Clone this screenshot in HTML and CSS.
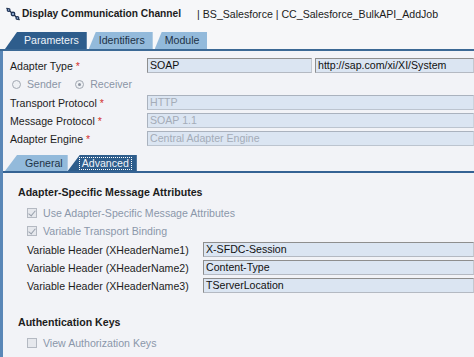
FILE: index.html
```html
<!DOCTYPE html>
<html lang="en">
  <head>
    <meta charset="UTF-8" />
    <title>Display Communication Channel</title>
    <link rel="stylesheet" href="styles.css">
  </head>
  <body>
    <div class="header">
      <svg class="icon" width="14" height="14" viewBox="0 0 14 14">
        <line x1="0.5" y1="1" x2="13.5" y2="13" stroke="#1b2a44" stroke-width="1.3" />
        <circle cx="2.6" cy="3" r="2" fill="#1f3356" />
        <circle cx="2.6" cy="3" r="0.8" fill="#a9c6ec" />
        <circle cx="7" cy="7" r="2.4" fill="#1f3356" />
        <circle cx="7" cy="7" r="1" fill="#a9c6ec" />
        <circle cx="11.4" cy="11" r="2" fill="#1f3356" />
        <circle cx="11.4" cy="11" r="0.8" fill="#a9c6ec" />
      </svg>
      <span class="title">Display Communication Channel</span>
      <span class="path">| BS_Salesforce | CC_Salesforce_BulkAPI_AddJob</span>
    </div>

    <div class="tabs">
      <div class="tab active first">Parameters</div>
      <div class="tab">Identifiers</div>
      <div class="tab">Module</div>
    </div>

    <div class="panel">
      <div class="form">
        <div class="row">
          <div class="label">Adapter Type <span class="req">*</span></div>
          <div class="field short">SOAP</div>
          <div class="field wide gap">http://sap.com/xi/XI/System</div>
        </div>
        <div class="row radios">
          <span class="radio"></span><span class="radio-text">Sender</span>
          <span class="radio on second"></span><span class="radio-text">Receiver</span>
        </div>
        <div class="row">
          <div class="label">Transport Protocol <span class="req">*</span></div>
          <div class="field wide off">HTTP</div>
        </div>
        <div class="row">
          <div class="label">Message Protocol <span class="req">*</span></div>
          <div class="field wide off">SOAP 1.1</div>
        </div>
        <div class="row">
          <div class="label">Adapter Engine <span class="req">*</span></div>
          <div class="field wide off">Central Adapter Engine</div>
        </div>
      </div>

      <div class="tabs sub">
        <div class="tab first">General</div>
        <div class="tab active adv"><span class="focus">Advanced</span></div>
      </div>

      <div class="section">
        <div class="section-title">Adapter-Specific Message Attributes</div>
        <div class="check-row first-check"><span class="box checked"></span>Use Adapter-Specific Message Attributes</div>
        <div class="check-row"><span class="box checked"></span>Variable Transport Binding</div>
        <div class="var-row">
          <div class="var-label">Variable Header (XHeaderName1)</div>
          <div class="field wide">X-SFDC-Session</div>
        </div>
        <div class="var-row">
          <div class="var-label">Variable Header (XHeaderName2)</div>
          <div class="field wide">Content-Type</div>
        </div>
        <div class="var-row">
          <div class="var-label">Variable Header (XHeaderName3)</div>
          <div class="field wide">TServerLocation</div>
        </div>

        <div class="section-title auth">Authentication Keys</div>
        <div class="check-row first-check"><span class="box"></span>View Authorization Keys</div>
      </div>
    </div>
  </body>
</html>
```

FILE: styles.css
```css
* {
  margin: 0;
  padding: 0;
  box-sizing: border-box;
}

body {
  font-family: 'Liberation Sans', Arial, sans-serif;
  font-size: 10.6px;
  color: #1c1c1c;
  background: #f6f7f9;
  width: 474px;
  height: 357px;
  overflow: hidden;
}

.header {
  display: flex;
  align-items: center;
  height: 32px;
  padding: 7px 0 11px 6px;
  line-height: 14px;
}

.icon {
  margin-right: 2px;
}

.title {
  font-weight: bold;
  font-size: 10.2px;
}

.path {
  margin-left: 16px;
}

/* tab strips */
.tabs {
  display: flex;
  height: 19px;
  padding-left: 5px;
  border-bottom: 2px solid #3c6995;
}

.tab {
  height: 17px;
  line-height: 17px;
  padding: 0 8px 0 10px;
  margin-right: 2px;
  background: #93badb;
  color: #1e3246;
  clip-path: polygon(7px 0, 100% 0, 100% 100%, 0 100%);
}

.tab.first {
  padding-left: 19px;
  clip-path: polygon(12px 0, 100% 0, 100% 100%, 0 100%);
}

.tab.active {
  background: #2e5d8c;
  color: #eef3f9;
}

.tabs.sub {
  height: 18px;
  margin-top: 9px;
  padding-left: 2px;
  border-bottom-color: #356394;
}

.tabs.sub .tab {
  height: 16px;
  line-height: 16px;
}

.tabs.sub .tab.first {
  padding: 0 5px 0 20px;
  margin-right: 0;
}

.tab.adv {
  padding: 0 6px 0 12px;
  clip-path: polygon(12px 0, 100% 0, 100% 100%, 0 100%);
}

.focus {
  display: inline-block;
  line-height: 11px;
  padding: 0 2px;
  outline: 1px dotted #ffffff;
}

/* main panel */
.panel {
  border-left: 3px solid #5a87b7;
  background: #f2f3f7;
  height: 306px;
  padding-top: 7px;
}

.form {
  padding-left: 7px;
}

.row {
  display: flex;
  align-items: center;
  height: 15px;
  margin-bottom: 3px;
}

.label {
  width: 137px;
  flex-shrink: 0;
}

.req {
  color: #d3302f;
}

.field {
  height: 15px;
  line-height: 13px;
  padding: 0 2px;
  background: #dbe5f2;
  border: 1px solid;
  border-color: #8e8e8e #c3c8d0 #b4b9c2 #8e8e8e;
  color: #111;
  white-space: nowrap;
  overflow: hidden;
}

.field.short {
  width: 165px;
}

.field.wide {
  flex: 1;
}

.field.gap {
  margin-left: 3px;
}

.field.off {
  color: #a4acb8;
  border-color: #aab2be #ccd3dd #bcc4cf #aab2be;
}

/* radio buttons */
.row.radios {
  height: 16px;
  color: #8b95a6;
}

.radio {
  width: 9px;
  height: 9px;
  margin-left: 2px;
  margin-right: 6px;
  border: 1px solid #a2a8b2;
  border-radius: 50%;
  background: #eef0f4;
  position: relative;
}

.radio.second {
  margin-left: 14px;
}

.radio.on::after {
  content: '';
  position: absolute;
  left: 2px;
  top: 2px;
  width: 3px;
  height: 3px;
  border-radius: 50%;
  background: #8e95a2;
}

/* advanced section */
.section {
  padding-left: 15px;
}

.section-title {
  font-weight: bold;
  line-height: 14px;
  margin-top: 12px;
}

.section-title.auth {
  margin-top: 22px;
}

.check-row {
  display: flex;
  align-items: center;
  height: 16px;
  margin-top: 2px;
  padding-left: 9px;
  color: #8b97aa;
}

.check-row.first-check {
  margin-top: 6px;
}

.box {
  width: 10px;
  height: 10px;
  margin-right: 6px;
  border: 1px solid #b4b9c2;
  background: #e6e8ed;
  position: relative;
}

.box.checked::after {
  content: '';
  position: absolute;
  left: 2px;
  top: 0px;
  width: 3px;
  height: 6px;
  border: solid #98a0ac;
  border-width: 0 1.5px 1.5px 0;
  transform: rotate(40deg);
}

.var-row {
  display: flex;
  align-items: center;
  height: 15px;
  margin-top: 3px;
  padding-left: 9px;
}

.var-label {
  width: 176px;
  flex-shrink: 0;
}
```
